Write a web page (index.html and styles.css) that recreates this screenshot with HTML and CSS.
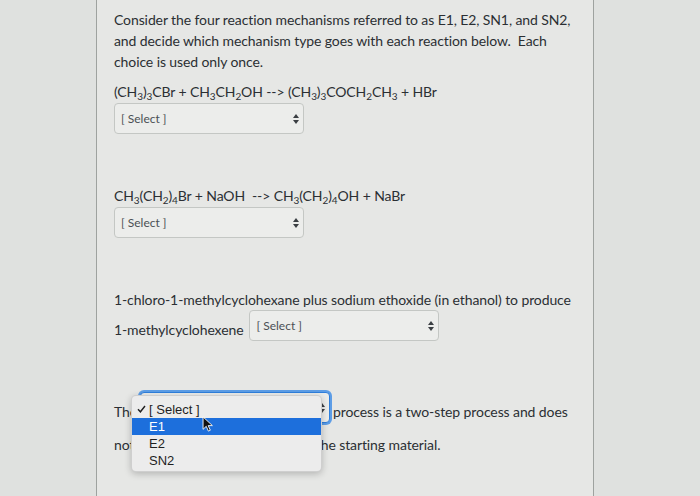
FILE: index.html
```html
<!DOCTYPE html>
<html lang="en">
<head>
<meta charset="utf-8">
<title>Reaction mechanisms</title>
<link rel="stylesheet" href="styles.css">
</head>
<body>
  <main class="card">
    <p class="intro">Consider the four reaction mechanisms referred to as E1, E2, SN1, and SN2,<br>and decide which mechanism type goes with each reaction below.&nbsp; Each<br>choice is used only once.</p>

    <section class="question q-first">
      <p class="rxn">(CH<sub>3</sub>)<sub>3</sub>CBr + CH<sub>3</sub>CH<sub>2</sub>OH --&gt; (CH<sub>3</sub>)<sub>3</sub>COCH<sub>2</sub>CH<sub>3</sub> + HBr</p>
      <div class="select"><span>[ Select ]</span><svg class="updown" viewBox="0 0 6 10" width="6" height="10"><path d="M0 4 3 0 6 4Z M0 6 3 10 6 6Z"/></svg></div>
    </section>

    <section class="question">
      <p class="rxn">CH<sub>3</sub>(CH<sub>2</sub>)<sub>4</sub>Br + NaOH &nbsp;--&gt; CH<sub>3</sub>(CH<sub>2</sub>)<sub>4</sub>OH + NaBr</p>
      <div class="select"><span>[ Select ]</span><svg class="updown" viewBox="0 0 6 10" width="6" height="10"><path d="M0 4 3 0 6 4Z M0 6 3 10 6 6Z"/></svg></div>
    </section>

    <section class="question">
      <p class="line">1-chloro-1-methylcyclohexane plus sodium ethoxide (in ethanol) to produce</p>
      <div class="row">
        <span class="word">1-methylcyclohexene</span>
        <div class="select inline"><span>[ Select ]</span><svg class="updown" viewBox="0 0 6 10" width="6" height="10"><path d="M0 4 3 0 6 4Z M0 6 3 10 6 6Z"/></svg></div>
      </div>
    </section>

    <section class="question">
      <div class="row">
        <span class="word">The</span>
        <div class="select-wrap">
          <div class="select focused"><span>[ Select ]</span><svg class="updown" viewBox="0 0 6 10" width="6" height="10"><path d="M0 4 3 0 6 4Z M0 6 3 10 6 6Z"/></svg></div>
          <ul class="menu">
            <li class="checked"><svg class="tick" viewBox="0 0 9 8" width="9" height="8"><path d="M1 4.2 3.4 6.8 8 1"/></svg>[ Select ]</li>
            <li class="active">E1</li>
            <li>E2</li>
            <li>SN2</li>
          </ul>
          <svg class="pointer" viewBox="0 0 12 18" width="11" height="16"><path d="M1 1V15L4.6 11.6 7 17 9.2 16 6.8 10.8H11.5Z"/></svg>
        </div>
        <span class="word after">process is a two-step process and does</span>
      </div>
      <p class="line cont">not invert the stereochemistry of the starting material.</p>
    </section>
  </main>
</body>
</html>
```

FILE: styles.css
```css
html, body {
  margin: 0;
  height: 100%;
}

body {
  background: #dfe1df;
  font-family: Lato, "Noto Sans", sans-serif;
  color: #2b2f33;
  overflow: hidden;
}

.card {
  position: relative;
  box-sizing: border-box;
  margin-left: 96px;
  width: 498px;
  min-height: 100%;
  padding: 9px 0 0 17px;
  background: #e6e7e5;
  border-left: 1px solid #9ea29f;
  border-right: 1px solid #9ea29f;
}

p {
  margin: 0;
}

.intro,
.rxn,
.line,
.word {
  font-size: 14px;
  line-height: 21px;
  letter-spacing: -0.1px;
  white-space: nowrap;
}

sub {
  font-size: 10px;
  line-height: 0;
  vertical-align: -3px;
}

.question {
  margin-top: 51px;
}

.question.q-first {
  margin-top: 9px;
}

.select {
  box-sizing: border-box;
  display: flex;
  align-items: center;
  justify-content: space-between;
  width: 190px;
  height: 31px;
  margin-top: 1px;
  padding: 0 4px 0 6px;
  background: #ecedeb;
  border: 1px solid #c4c7c4;
  border-radius: 4px;
  font-size: 12px;
  color: #4b5054;
}

.select.inline {
  margin: 0 0 0 6px;
}

.updown {
  fill: #3a3e42;
}

.row {
  display: flex;
  align-items: flex-end;
}

.row .word {
  padding-bottom: 1px;
}

.select-wrap {
  position: relative;
  margin: 0 3px 0 3px;
}

.select.focused {
  margin: 0;
  border-color: #2f7fdc;
  box-shadow: 0 0 0 2px #5d9de6;
}

.line.cont {
  margin-top: 11px;
}

/* open option list of the focused select */
.menu {
  position: absolute;
  left: -9px;
  top: 3px;
  width: 191px;
  margin: 0;
  padding: 5px 0 2px;
  list-style: none;
  box-sizing: border-box;
  background: #ececec;
  border: 1px solid rgba(0, 0, 0, 0.12);
  border-radius: 5px;
  box-shadow: 0 2px 7px rgba(0, 0, 0, 0.22);
  font-family: "Liberation Sans", Arial, sans-serif;
  font-size: 13px;
  color: #1f1f1f;
}

.menu li {
  position: relative;
  height: 17px;
  line-height: 17px;
  padding-left: 17px;
}

.menu li.active {
  background: #1d6fdc;
  color: #fff;
}

.tick {
  position: absolute;
  left: 5px;
  top: 4px;
  fill: none;
  stroke: #1f1f1f;
  stroke-width: 1.4;
}

.pointer {
  position: absolute;
  left: 62px;
  top: 24px;
  fill: #111;
  stroke: #fff;
  stroke-width: 1;
  stroke-linejoin: round;
}
```
